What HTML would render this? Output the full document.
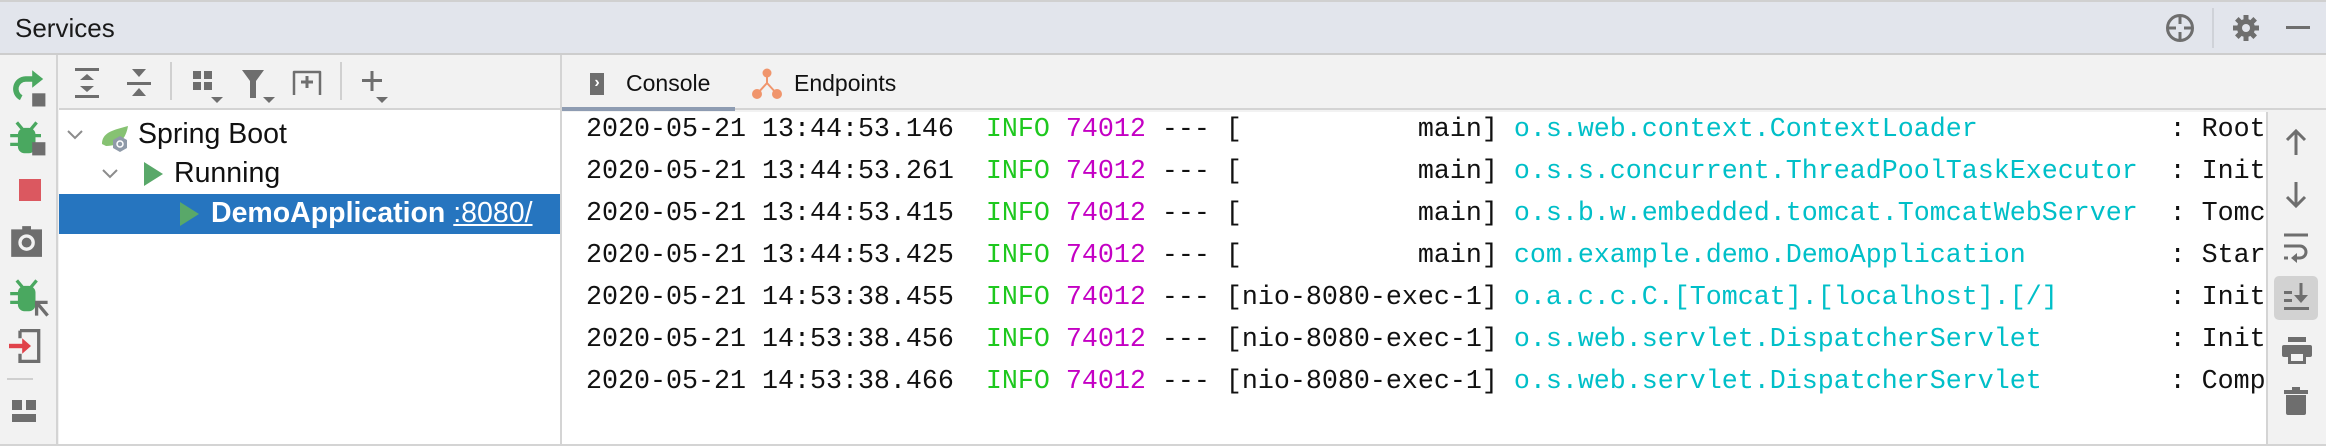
<!DOCTYPE html>
<html><head><meta charset="utf-8"><style>
*{margin:0;padding:0;box-sizing:border-box}
body{width:2326px;height:446px;overflow:hidden;background:#f2f2f2;font-family:"Liberation Sans",sans-serif;position:relative}
.a{position:absolute}
.mono{font-family:"Liberation Mono",monospace;font-size:26.67px;white-space:pre;line-height:42px}
.g{color:#1ec81e}.m{color:#c400c4}.c{color:#00bfc8}
</style></head><body>
<div class="a" style="left:0;top:0;width:2326px;height:55px;background:#e2e5ec;border-top:2px solid #d0d0d0;border-bottom:2px solid #cdcdcd"></div>
<div class="a" style="left:15px;top:13px;font-size:26px;color:#1a1a1a">Services</div>
<svg class="a" style="left:2164px;top:12px" width="32" height="32" viewBox="0 0 32 32"><circle cx="16" cy="16" r="12.5" fill="none" stroke="#6e6e6e" stroke-width="3"/><path d="M16 3v9M16 20v9M3 16h9M20 16h9" stroke="#6e6e6e" stroke-width="3"/></svg>
<div class="a" style="left:2212px;top:8px;width:2px;height:40px;background:#cfd2d8"></div>
<svg class="a" style="left:2231px;top:13px" width="30" height="30" viewBox="0 0 30 30"><g fill="#6e6e6e"><circle cx="15" cy="15" r="9"/><g stroke="#6e6e6e" stroke-width="5"><path d="M15 2v26M2 15h26M5.8 5.8l18.4 18.4M24.2 5.8L5.8 24.2"/></g></g><circle cx="15" cy="15" r="4" fill="#e2e5ec"/></svg>
<div class="a" style="left:2286px;top:26px;width:24px;height:3px;background:#6e6e6e"></div>
<div class="a" style="left:0;top:55px;width:58px;height:391px;background:#f2f2f2;border-right:2px solid #d4d4d4"></div>
<svg class="a" style="left:8px;top:68px" width="44" height="44" viewBox="0 0 40 40"><path d="M23 10H16a9 9 0 0 0-4 17" fill="none" stroke="#4aa860" stroke-width="5"/><path d="M22 2l10 8-10 8z" fill="#4aa860"/><rect x="22" y="23" width="12" height="12" fill="#6e6e6e"/></svg>
<svg class="a" style="left:8px;top:120px" width="44" height="40" viewBox="0 0 40 36"><path d="M8 2l5 6M26 2l-5 6" stroke="#4aa860" stroke-width="3"/><rect x="9" y="7" width="16" height="23" rx="6" fill="#4aa860"/><path d="M2 14h8M2 22h8M24 14h6" stroke="#4aa860" stroke-width="3"/><rect x="22" y="20" width="12" height="12" fill="#6e6e6e"/></svg>
<div class="a" style="left:19px;top:179px;width:22px;height:22px;background:#db5860"></div>
<svg class="a" style="left:9px;top:226px" width="44" height="31" viewBox="0 0 40 28"><path d="M12 0h8v3h10v25H2V3h10z" fill="#6e6e6e"/><circle cx="16" cy="15" r="6" fill="none" stroke="#f2f2f2" stroke-width="3"/></svg>
<svg class="a" style="left:8px;top:278px" width="44" height="40" viewBox="0 0 40 36"><path d="M8 2l5 6M26 2l-5 6" stroke="#4aa860" stroke-width="3"/><rect x="9" y="7" width="16" height="23" rx="6" fill="#4aa860"/><path d="M2 14h8M2 22h8" stroke="#4aa860" stroke-width="3"/><path d="M26 34V22h10M26 22l10 12" stroke="#6e6e6e" stroke-width="3" fill="none"/></svg>
<svg class="a" style="left:9px;top:328px" width="44" height="36" viewBox="0 0 40 32"><path d="M10 2h17v28H10v-7M10 9V2" fill="none" stroke="#6e6e6e" stroke-width="3"/><path d="M0 16h14" stroke="#e0424a" stroke-width="4"/><path d="M12 9l8 7-8 7z" fill="#e0424a"/></svg>
<div class="a" style="left:7px;top:378px;width:26px;height:2px;background:#cfcfcf"></div>
<svg class="a" style="left:12px;top:400px" width="30" height="22" viewBox="0 0 30 22"><rect x="0" y="0" width="10" height="10" fill="#6e6e6e"/><rect x="14" y="0" width="10" height="10" fill="#6e6e6e"/><rect x="0" y="14" width="24" height="8" fill="#6e6e6e"/></svg>
<div class="a" style="left:59px;top:55px;width:502px;height:55px;background:#f2f2f2;border-bottom:2px solid #d4d4d4"></div>
<div class="a" style="left:59px;top:110px;width:502px;height:334px;background:#fff"></div>
<div class="a" style="left:560px;top:55px;width:2px;height:391px;background:#d4d4d4"></div>
<svg class="a" style="left:74px;top:68px" width="26" height="30" viewBox="0 0 26 30"><g fill="#6e6e6e"><rect x="1" y="0" width="24" height="3"/><rect x="1" y="27" width="24" height="3"/><path d="M6 12l7-6 7 6zM6 18l7 6 7-6z"/></g></svg>
<svg class="a" style="left:126px;top:68px" width="26" height="30" viewBox="0 0 26 30"><g fill="#6e6e6e"><rect x="1" y="14" width="24" height="3"/><path d="M6 1l7 8 7-8zM6 28l7-8 7 8z"/></g></svg>
<div class="a" style="left:170px;top:62px;width:2px;height:38px;background:#d0d0d0"></div>
<svg class="a" style="left:193px;top:71px" width="32" height="32" viewBox="0 0 32 32"><g fill="#6e6e6e"><rect x="0" y="0" width="8" height="8"/><rect x="11" y="0" width="8" height="8"/><rect x="0" y="11" width="8" height="8"/><rect x="11" y="11" width="8" height="8"/><path d="M18 26h12l-6 6z"/></g></svg>
<svg class="a" style="left:242px;top:70px" width="36" height="34" viewBox="0 0 36 34"><g fill="#6e6e6e"><path d="M0 0h22l-8 11v17h-6V11z"/><path d="M21 27h12l-6 6z"/></g></svg>
<svg class="a" style="left:292px;top:68px" width="32" height="28" viewBox="0 0 32 28"><path d="M2 27V4h26v23" fill="none" stroke="#6e6e6e" stroke-width="2.5" stroke-linejoin="round"/><path d="M9 14h12M15 8v12" stroke="#6e6e6e" stroke-width="3"/></svg>
<div class="a" style="left:340px;top:62px;width:2px;height:38px;background:#d0d0d0"></div>
<svg class="a" style="left:362px;top:71px" width="32" height="32" viewBox="0 0 32 32"><g fill="#6e6e6e"><rect x="0" y="8" width="20" height="3"/><rect x="8.5" y="0" width="3" height="20"/><path d="M14 26h12l-6 6z"/></g></svg>
<svg class="a" style="left:67px;top:129px" width="16" height="12" viewBox="0 0 16 12"><path d="M1 2l7 7 7-7" fill="none" stroke="#8c8c8c" stroke-width="2"/></svg>
<svg class="a" style="left:100px;top:122px" width="34" height="30" viewBox="0 0 34 30"><path d="M2 22C2 10 14 8 28 4 26 16 20 24 6 24z" fill="#86c272"/><path d="M20 14l7 4v8l-7 4-7-4v-8z" fill="#8f9aa8"/><circle cx="20" cy="22" r="3" fill="none" stroke="#fff" stroke-width="1.5"/></svg>
<div class="a" style="left:138px;top:118px;font-size:28.5px;color:#111">Spring Boot</div>
<svg class="a" style="left:102px;top:168px" width="16" height="12" viewBox="0 0 16 12"><path d="M1 2l7 7 7-7" fill="none" stroke="#8c8c8c" stroke-width="2"/></svg>
<svg class="a" style="left:144px;top:162px" width="20" height="24" viewBox="0 0 20 24"><path d="M0 0l19 12L0 24z" fill="#59a869"/></svg>
<div class="a" style="left:174px;top:157px;font-size:28.5px;color:#111">Running</div>
<div class="a" style="left:59px;top:194px;width:501px;height:40px;background:#2675bf"></div>
<svg class="a" style="left:180px;top:202px" width="20" height="24" viewBox="0 0 20 24"><path d="M0 0l19 12L0 24z" fill="#59a869"/></svg>
<div class="a" style="left:211px;top:197px;font-size:28.5px;color:#fff;font-weight:bold">DemoApplication <span style="font-weight:normal;text-decoration:underline">:8080/</span></div>
<div class="a" style="left:562px;top:55px;width:1764px;height:55px;background:#f2f2f2;border-bottom:2px solid #d4d4d4"></div>
<div class="a" style="left:562px;top:107px;width:173px;height:4px;background:#8e9cb2"></div>
<div class="a" style="left:590px;top:73px;width:14px;height:22px;background:#6e6e6e;color:#fff;font-size:16px;line-height:20px;text-align:center;font-weight:bold">›</div>
<div class="a" style="left:626px;top:70px;font-size:23px;color:#111">Console</div>
<svg class="a" style="left:752px;top:68px" width="30" height="32" viewBox="0 0 30 32"><g fill="#f0956c"><circle cx="15" cy="5" r="4.5"/><circle cx="5" cy="26" r="5"/><circle cx="25" cy="26" r="5"/></g><path d="M15 5v10L5 26M15 15l10 11" fill="none" stroke="#f0956c" stroke-width="2"/></svg>
<div class="a" style="left:794px;top:70px;font-size:23px;color:#111">Endpoints</div>
<div class="a" style="left:562px;top:112px;width:1705px;height:332px;background:#fff;overflow:hidden">
<div class="mono a" style="left:24px;top:-3px;color:#111">2020-05-21 13:44:53.146  <span class="g">INFO</span> <span class="m">74012</span> --- [           main] <span class="c">o.s.web.context.ContextLoader           </span> : Root
2020-05-21 13:44:53.261  <span class="g">INFO</span> <span class="m">74012</span> --- [           main] <span class="c">o.s.s.concurrent.ThreadPoolTaskExecutor </span> : Init
2020-05-21 13:44:53.415  <span class="g">INFO</span> <span class="m">74012</span> --- [           main] <span class="c">o.s.b.w.embedded.tomcat.TomcatWebServer </span> : Tomc
2020-05-21 13:44:53.425  <span class="g">INFO</span> <span class="m">74012</span> --- [           main] <span class="c">com.example.demo.DemoApplication        </span> : Star
2020-05-21 14:53:38.455  <span class="g">INFO</span> <span class="m">74012</span> --- [nio-8080-exec-1] <span class="c">o.a.c.c.C.[Tomcat].[localhost].[/]      </span> : Init
2020-05-21 14:53:38.456  <span class="g">INFO</span> <span class="m">74012</span> --- [nio-8080-exec-1] <span class="c">o.s.web.servlet.DispatcherServlet       </span> : Init
2020-05-21 14:53:38.466  <span class="g">INFO</span> <span class="m">74012</span> --- [nio-8080-exec-1] <span class="c">o.s.web.servlet.DispatcherServlet       </span> : Comp</div>
</div>
<div class="a" style="left:2266px;top:112px;width:2px;height:332px;background:#d4d4d4"></div>
<div class="a" style="left:2268px;top:112px;width:56px;height:332px;background:#f2f2f2"></div>
<svg class="a" style="left:2284px;top:128px" width="24" height="28" viewBox="0 0 24 28"><path d="M12 3v24M3 12l9-9 9 9" fill="none" stroke="#6e6e6e" stroke-width="3"/></svg>
<svg class="a" style="left:2284px;top:181px" width="24" height="28" viewBox="0 0 24 28"><path d="M12 1v24M3 16l9 9 9-9" fill="none" stroke="#6e6e6e" stroke-width="3"/></svg>
<svg class="a" style="left:2283px;top:233px" width="28" height="30" viewBox="0 0 28 30"><g stroke="#6e6e6e" stroke-width="3" fill="none"><path d="M1 2h24M1 13h16a6 6 0 0 1 0 12h-6M1 25h4"/></g><path d="M14 20v10l-6-5z" fill="#6e6e6e"/></svg>
<div class="a" style="left:2274px;top:276px;width:44px;height:44px;background:#d2d2d2;border-radius:5px"></div>
<svg class="a" style="left:2283px;top:283px" width="28" height="28" viewBox="0 0 28 28"><g fill="#6e6e6e"><rect x="1" y="24" width="25" height="3"/><rect x="1" y="8" width="8" height="3"/><rect x="1" y="16" width="8" height="3"/><rect x="16.5" y="0" width="3" height="14"/><path d="M11 12h14l-7 8z"/></g></svg>
<svg class="a" style="left:2282px;top:337px" width="30" height="28" viewBox="0 0 30 28"><g fill="#6e6e6e"><rect x="6" y="0" width="18" height="5"/><rect x="0" y="8" width="30" height="12" rx="2"/><rect x="6" y="15" width="18" height="12"/></g><rect x="9" y="17" width="12" height="7" fill="#f2f2f2"/></svg>
<svg class="a" style="left:2284px;top:387px" width="24" height="28" viewBox="0 0 24 28"><g fill="#6e6e6e"><rect x="0" y="3" width="24" height="4"/><rect x="8" y="0" width="8" height="4"/><path d="M2 8h20v18a2 2 0 0 1-2 2H4a2 2 0 0 1-2-2z"/></g></svg>
<div class="a" style="left:0;top:444px;width:2326px;height:2px;background:#d4d4d4"></div>
</body></html>
